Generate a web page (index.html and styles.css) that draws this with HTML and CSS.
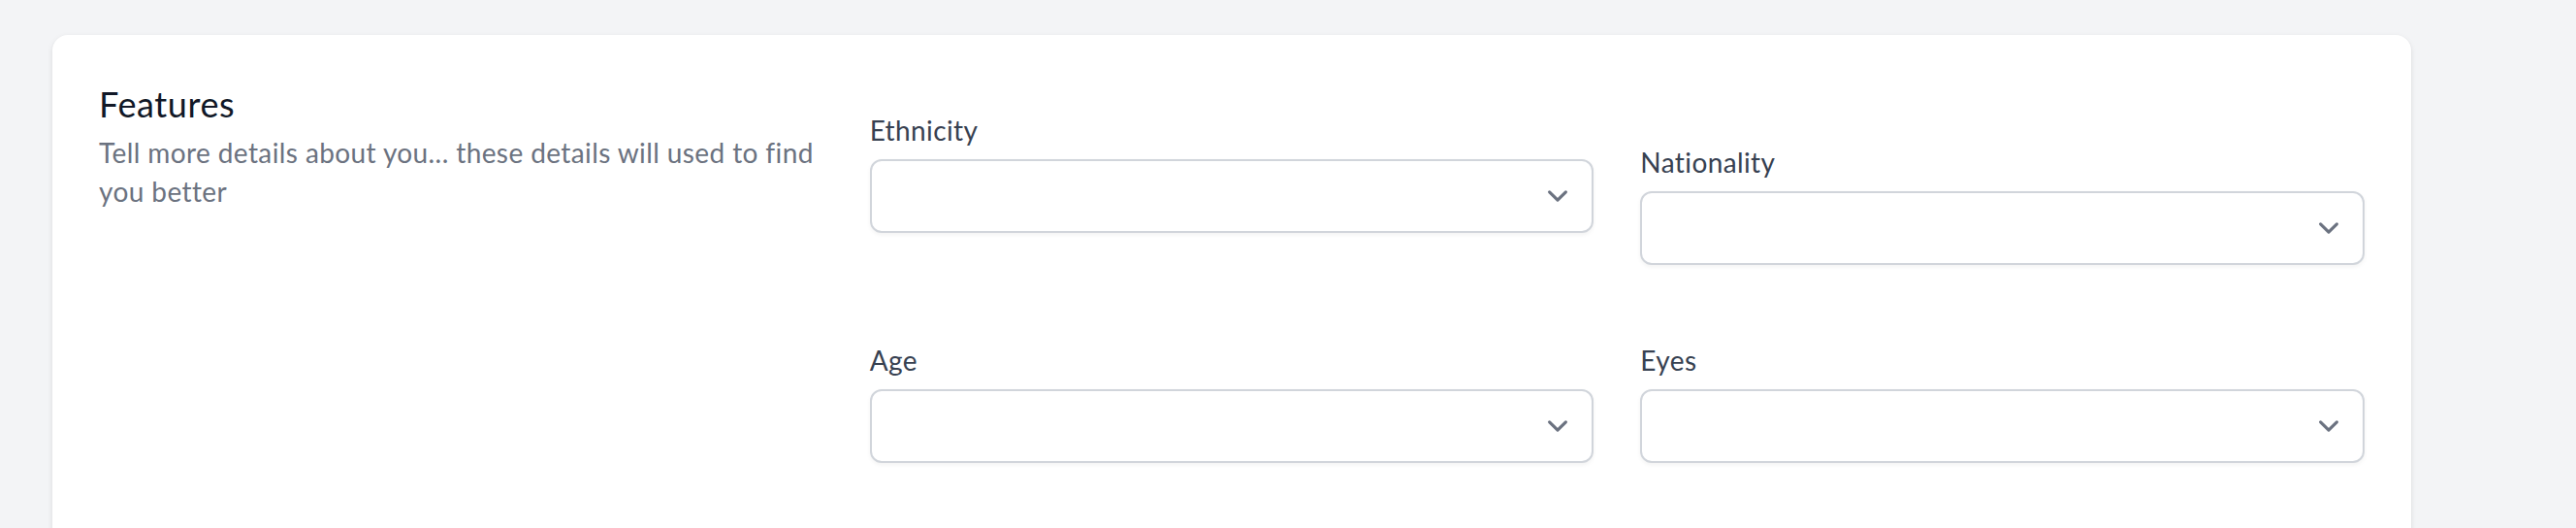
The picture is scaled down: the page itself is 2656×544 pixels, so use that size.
FILE: index.html
```html
<!DOCTYPE html>
<html lang="en">
<head>
<meta charset="utf-8">
<title>Features</title>
<link rel="stylesheet" href="styles.css">
</head>
<body>
<div class="page">
  <section class="card">
    <div class="grid">
      <div class="intro">
        <h3 class="title">Features</h3>
        <p class="desc">Tell more details about you... these details will used to find you better</p>
      </div>
      <div class="field field-first">
        <label class="label">Ethnicity</label>
        <div class="select">
          <svg class="chevron" viewBox="0 0 20 20" fill="none"><path d="M6 8l4 4 4-4" stroke="#6b7280" stroke-width="1.5" stroke-linecap="round" stroke-linejoin="round"/></svg>
        </div>
      </div>
      <div class="field field-offset">
        <label class="label">Nationality</label>
        <div class="select">
          <svg class="chevron" viewBox="0 0 20 20" fill="none"><path d="M6 8l4 4 4-4" stroke="#6b7280" stroke-width="1.5" stroke-linecap="round" stroke-linejoin="round"/></svg>
        </div>
      </div>
      <div class="spacer"></div>
      <div class="field">
        <label class="label">Age</label>
        <div class="select">
          <svg class="chevron" viewBox="0 0 20 20" fill="none"><path d="M6 8l4 4 4-4" stroke="#6b7280" stroke-width="1.5" stroke-linecap="round" stroke-linejoin="round"/></svg>
        </div>
      </div>
      <div class="field">
        <label class="label">Eyes</label>
        <div class="select">
          <svg class="chevron" viewBox="0 0 20 20" fill="none"><path d="M6 8l4 4 4-4" stroke="#6b7280" stroke-width="1.5" stroke-linecap="round" stroke-linejoin="round"/></svg>
        </div>
      </div>
    </div>
  </section>
</div>
</body>
</html>
```

FILE: styles.css
```css
* { box-sizing: border-box; }
html, body {
  margin: 0;
  padding: 0;
  background: #f3f4f6;
  height: 100%;
  overflow: hidden;
}
body {
  font-family: Lato, "Noto Sans", sans-serif;
  color: #111827;
}
.page {
  padding: 36px 170px 0 54px;
}
.card {
  background: #ffffff;
  border-radius: 16px;
  box-shadow: 0 2px 6px rgba(0,0,0,0.08), 0 2px 4px rgba(0,0,0,0.04);
  padding: 48px 48px 200px 48px;
}
.grid {
  display: grid;
  grid-template-columns: repeat(3, 1fr);
  column-gap: 48px;
  row-gap: 80px;
  align-items: start;
}
.title {
  margin: -5px 0 0 0;
  font-size: 36px;
  line-height: 56px;
  font-weight: 400;
  letter-spacing: 0.6px;
  color: #111827;
}
.desc {
  margin: 2px 0 0 0;
  font-size: 28px;
  line-height: 40px;
  letter-spacing: 0.4px;
  color: #6b7280;
}
.field {
  display: flex;
  flex-direction: column;
  gap: 12px;
}
.field-first { margin-top: 32px; }
.field-offset { margin-top: 65px; }
.label {
  font-size: 28px;
  line-height: 36px;
  letter-spacing: 0.4px;
  color: #374151;
}
.select {
  height: 76px;
  border: 2px solid #d1d5db;
  border-radius: 12px;
  background: #ffffff;
  box-shadow: 0 2px 4px rgba(0,0,0,0.05);
  display: flex;
  align-items: center;
  justify-content: flex-end;
  padding-right: 14px;
}
.chevron {
  width: 42px;
  height: 42px;
  display: block;
}
```
